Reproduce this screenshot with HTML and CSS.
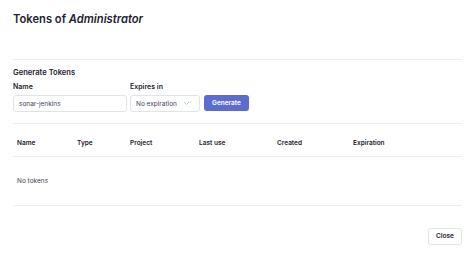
FILE: index.html
```html
<!DOCTYPE html>
<html lang="en">
<head>
  <meta charset="UTF-8" />
  <title>Tokens of Administrator</title>
  <link rel="stylesheet" href="styles.css">
</head>
<body>
  <div class="modal">
    <h2 class="modal-title">Tokens of <em>Administrator</em></h2>

    <div class="generate">
      <h3>Generate Tokens</h3>
      <form class="generate-form">
        <div class="field">
          <label for="tokenName">Name</label>
          <input type="text" id="tokenName" class="text-input" value="sonar-jenkins">
        </div>
        <div class="field">
          <label>Expires in</label>
          <div class="select">
            <span>No expiration</span>
            <svg width="7" height="5" viewBox="0 0 7 5"><path d="M1 1l2.5 2.5 2.5-2.5" fill="none" stroke="#c4c7d0" stroke-width="1"/></svg>
          </div>
        </div>
        <button type="button" class="btn-primary">Generate</button>
      </form>
    </div>

    <table class="tokens">
      <thead>
        <tr>
          <th class="col-name">Name</th>
          <th class="col-type">Type</th>
          <th class="col-project">Project</th>
          <th class="col-last">Last use</th>
          <th class="col-created">Created</th>
          <th>Expiration</th>
        </tr>
      </thead>
      <tbody>
        <tr>
          <td colspan="6" class="empty">No tokens</td>
        </tr>
      </tbody>
    </table>

    <div class="modal-footer">
      <button type="button" class="btn-secondary">Close</button>
    </div>
  </div>
</body>
</html>
```

FILE: styles.css
```css
:root {
  --text: #1d212f;
  --text-muted: #3e4357;
  --border: #eceef2;
  --input-border: #e1e3ea;
  --primary: #5d6cd0;
}

* {
  margin: 0;
  padding: 0;
  box-sizing: border-box;
  font-family: Inter, 'Noto Sans', sans-serif;
}

body {
  background: #fff;
  color: var(--text);
}

.modal {
  padding: 11px 12px 0 13px;
  width: 474px;
}

.modal-title {
  font-size: 11.2px;
  font-weight: 600;
  line-height: 16px;
  height: 49px;
  border-bottom: 1px solid var(--border);
}

.modal-title em {
  font-style: italic;
}

.generate {
  padding-top: 8px;
  border-bottom: 1px solid var(--border);
  padding-bottom: 11px;
}

.generate h3 {
  font-size: 7.6px;
  font-weight: 600;
  line-height: 10px;
  margin-bottom: 4px;
}

.generate-form {
  display: flex;
  align-items: flex-end;
  gap: 3px;
}

.field {
  display: flex;
  flex-direction: column;
}

.field label {
  font-size: 7px;
  font-weight: 600;
  line-height: 9px;
  margin-bottom: 4px;
}

.text-input {
  width: 114px;
  height: 17px;
  border: 1px solid var(--input-border);
  border-radius: 3px;
  padding: 0 5px;
  font-size: 6.5px;
  color: var(--text-muted);
  outline: none;
}

.select {
  width: 70px;
  height: 17px;
  border: 1px solid var(--input-border);
  border-radius: 3px;
  padding: 0 9px 0 5px;
  display: flex;
  align-items: center;
  justify-content: space-between;
  font-size: 6.5px;
  color: var(--text-muted);
}

.btn-primary {
  background: var(--primary);
  color: #fff;
  border: none;
  border-radius: 3px;
  height: 16px;
  width: 45px;
  margin-left: 1px;
  font-size: 6.5px;
  font-weight: 600;
  margin-bottom: 1px;
}

.tokens {
  width: 449px;
  border-collapse: collapse;
}

.tokens th {
  text-align: left;
  vertical-align: bottom;
  font-size: 6.5px;
  font-weight: 600;
  line-height: 8px;
  height: 32px;
  padding: 0 4px 9px;
  border-bottom: 1px solid var(--border);
}

.col-name { width: 60px; }
.col-type { width: 53px; }
.col-project { width: 69px; }
.col-last { width: 78px; }
.col-created { width: 76px; }

.tokens td.empty {
  font-size: 6.5px;
  color: var(--text-muted);
  height: 49px;
  padding: 0 4px;
  border-bottom: 1px solid var(--border);
}

.modal-footer {
  display: flex;
  justify-content: flex-end;
  padding-top: 22px;
}

.btn-secondary {
  background: #fff;
  border: 1px solid var(--input-border);
  border-radius: 3px;
  height: 17px;
  width: 34px;
  font-size: 6.5px;
  font-weight: 600;
  color: var(--text);
}
```
